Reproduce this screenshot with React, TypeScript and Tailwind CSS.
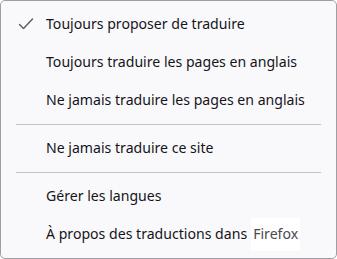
import React from 'react';

function Check() {
  return (
    <svg width="16" height="14" viewBox="0 0 16 14" className="absolute left-[17px] top-[12px]">
      <path d="M1.5 7.5 L5.5 11.5 L14.5 2" fill="none" stroke="#5b5b66" strokeWidth="1.4" strokeLinecap="round" strokeLinejoin="round" />
    </svg>
  );
}

function Item({ label, checked, children }: { label?: string; checked?: boolean; children?: React.ReactNode }) {
  return (
    <div className="relative flex h-[38px] items-center pl-[45px] text-[14.1px] text-[#15141a]">
      {checked && <Check />}
      {children ?? label}
    </div>
  );
}

function Separator() {
  return (
    <div className="flex h-[10px] items-center px-[15px]">
      <div className="h-px w-full bg-[#c4c4c8]" />
    </div>
  );
}

export default function App() {
  return (
    <div className="h-[259px] w-[337px] bg-white" style={{ fontFamily: '"Segoe UI", "Noto Sans", sans-serif' }}>
      <div className="flex h-full w-full flex-col rounded-[5px] border border-[#9f9fa3] bg-[#f9f9fb] pt-[4px] pb-[5px]">
        <Item label="Toujours proposer de traduire" checked />
        <Item label="Toujours traduire les pages en anglais" />
        <Item label="Ne jamais traduire les pages en anglais" />
        <Separator />
        <Item label="Ne jamais traduire ce site" />
        <Separator />
        <Item label="Gérer les langues" />
        <Item>
          <span>À propos des traductions dans</span>
          <span className="ml-[4px] flex h-[33px] items-center bg-white px-[2px] text-[#4a4a50]">Firefox</span>
        </Item>
      </div>
    </div>
  );
}
